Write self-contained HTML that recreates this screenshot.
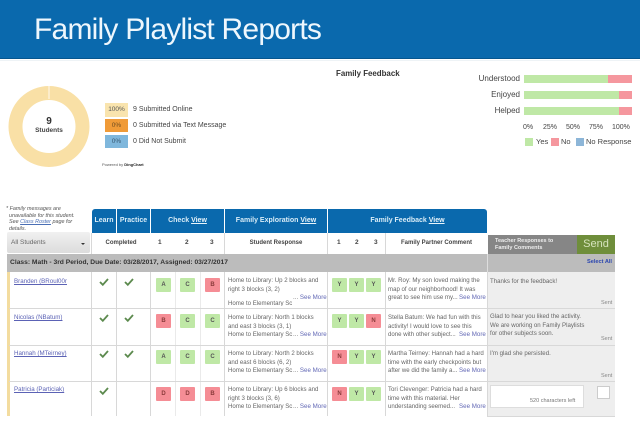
<!DOCTYPE html>
<html><head><meta charset="utf-8">
<style>
html,body{margin:0;padding:0;background:#fff}
#p{position:relative;width:640px;height:430px;overflow:hidden;background:#fff;font-family:"Liberation Sans",sans-serif;color:#444;filter:blur(.3px)}
#p div,#p svg{position:absolute}
.t{white-space:nowrap;line-height:1}
.b{font-weight:bold}
.hd{background:#0a69ad;color:#d8ecf7;top:209px;height:24px;line-height:24px;text-align:center;font-size:7px;font-weight:bold;white-space:nowrap}
.hd u{color:#e8f4fb}
.bad{width:15px;height:14px;line-height:14px;text-align:center;font-size:6px;font-weight:bold;color:#555;border-radius:1px}
.g{background:#bfe8a6}
.r{background:#f58d95;color:#8a3a3a}
.vl{width:1px;background:#d8d8d8;top:254px;height:163px}
.hl{height:1px;background:#d8d8d8;left:9px;width:606px}
.tx{font-size:6.1px;line-height:8.5px;color:#666;white-space:nowrap}
.lnk{font-size:6.2px;color:#5b62b5;text-decoration:underline;white-space:nowrap;line-height:1}
.more{font-size:6.2px;color:#6268b5;white-space:nowrap;line-height:1}
</style></head><body>
<div id="p">
<div style="left:0;top:0;width:640px;height:58px;background:#0a69ad;border-bottom:1px solid #06568f"></div>
<div class="t" style="left:34px;top:15px;font-size:30px;color:#eef7fd;letter-spacing:-.78px">Family Playlist Reports</div>
<div style="left:0;top:60px;width:640px;height:1px;background:#eef3f6"></div>

<svg style="left:0;top:80px" width="100" height="95"><circle cx="49" cy="46.5" r="33.5" fill="none" stroke="#f9e0a6" stroke-width="14"/><rect x="48.6" y="6" width=".8" height="13" fill="#fff"/></svg>
<div class="t b" style="left:39px;top:117px;width:20px;text-align:center;font-size:10px;color:#333">9</div>
<div class="t b" style="left:29px;top:128px;width:40px;text-align:center;font-size:6.5px;color:#444">Students</div>

<div style="left:105px;top:103px;width:23px;height:14px;line-height:14px;background:#f9e4ae;text-align:center;font-size:6.5px;color:#555">100%</div>
<div style="left:105px;top:119px;width:23px;height:13px;line-height:13px;background:#f09b38;text-align:center;font-size:6.5px;color:#6b4a20">0%</div>
<div style="left:105px;top:135px;width:23px;height:13px;line-height:13px;background:#7fb7dc;text-align:center;font-size:6.5px;color:#35566e">0%</div>
<div class="t" style="left:133px;top:106px;font-size:7px">9 Submitted Online</div>
<div class="t" style="left:133px;top:122px;font-size:7px">0 Submitted via Text Message</div>
<div class="t" style="left:133px;top:138px;font-size:7px">0 Did Not Submit</div>
<div class="t" style="left:102px;top:163px;font-size:4px;color:#555">Powered by <b style="color:#222">DingChart</b></div>

<div class="t b" style="left:336px;top:70px;font-size:7.9px;color:#333">Family Feedback</div>
<div class="t" style="right:120px;top:75px;font-size:8px">Understood</div>
<div class="t" style="right:120px;top:91px;font-size:8px">Enjoyed</div>
<div class="t" style="right:120px;top:107px;font-size:8px">Helped</div>
<div style="left:524px;top:75px;width:84px;height:8px;background:#bfe8a6"></div><div style="left:608px;top:75px;width:24px;height:8px;background:#f5979e"></div>
<div style="left:524px;top:91px;width:95px;height:8px;background:#bfe8a6"></div><div style="left:619px;top:91px;width:13px;height:8px;background:#f5979e"></div>
<div style="left:524px;top:107px;width:95px;height:8px;background:#bfe8a6"></div><div style="left:619px;top:107px;width:13px;height:8px;background:#f5979e"></div>
<div class="t" style="left:523px;top:124px;font-size:7px">0%</div>
<div class="t" style="left:543px;top:124px;font-size:7px">25%</div>
<div class="t" style="left:566px;top:124px;font-size:7px">50%</div>
<div class="t" style="left:589px;top:124px;font-size:7px">75%</div>
<div class="t" style="left:612px;top:124px;font-size:7px">100%</div>
<div style="left:525px;top:138px;width:8px;height:8px;background:#bfe8a6"></div>
<div class="t" style="left:536px;top:138px;font-size:7.5px">Yes</div>
<div style="left:551px;top:138px;width:8px;height:8px;background:#f5979e"></div>
<div class="t" style="left:561px;top:138px;font-size:7.5px">No</div>
<div style="left:576px;top:138px;width:8px;height:8px;background:#8db6d8"></div>
<div class="t" style="left:586px;top:138px;font-size:7.5px">No Response</div>

<div class="tx" style="left:6px;top:206px;font-size:5.4px;line-height:6.5px;font-style:italic;color:#555">* Family messages are<br>&nbsp;&nbsp;unavailable for this student.<br>&nbsp;&nbsp;See <span style="color:#4a6fb5;text-decoration:underline">Class Roster</span> page for<br>&nbsp;&nbsp;details.</div>

<div class="hd" style="left:92px;width:24px;border-radius:3px 0 0 0">Learn</div>
<div class="hd" style="left:117px;width:33px">Practice</div>
<div class="hd" style="left:151px;width:73px">Check <u>View</u></div>
<div class="hd" style="left:225px;width:102px">Family Exploration <u>View</u></div>
<div class="hd" style="left:328px;width:159px;border-radius:0 3px 0 0">Family Feedback <u>View</u></div>

<div style="left:7px;top:232px;width:83px;height:21px;background:linear-gradient(#f0f0f0,#dcdcdc);border-radius:2px"></div>
<div class="t" style="left:11px;top:240px;font-size:6.5px;color:#666">All Students</div>
<div style="left:81px;top:243px;width:0;height:0;border-left:2.5px solid transparent;border-right:2.5px solid transparent;border-top:2.5px solid #333"></div>

<div class="t b" style="left:92px;top:240px;width:58px;text-align:center;font-size:6px">Completed</div>
<div class="t b" style="left:158px;top:240px;font-size:6.5px">1</div>
<div class="t b" style="left:185px;top:240px;font-size:6.5px">2</div>
<div class="t b" style="left:210px;top:240px;font-size:6.5px">3</div>
<div class="t b" style="left:225px;top:240px;width:102px;text-align:center;font-size:6px">Student Response</div>
<div class="t b" style="left:337px;top:240px;font-size:6.5px">1</div>
<div class="t b" style="left:355px;top:240px;font-size:6.5px">2</div>
<div class="t b" style="left:374px;top:240px;font-size:6.5px">3</div>
<div class="t b" style="left:386px;top:240px;width:101px;text-align:center;font-size:6px">Family Partner Comment</div>

<div style="left:488px;top:235px;width:89px;height:19px;background:#868686"></div>
<div class="tx" style="left:495px;top:237.5px;font-size:5.5px;line-height:7px;color:#eee;font-weight:bold">Teacher Responses to<br>Family Comments</div>
<div style="left:577px;top:235px;width:38px;height:19px;line-height:19px;background:#6f8e3b;color:#d6e3bd;text-align:center;font-size:11px">Send</div>

<div style="left:488px;top:272px;width:127px;height:145px;background:#eeeeee"></div>
<div style="left:7px;top:272px;width:3px;height:144px;background:#f3dc9f"></div>
<div class="vl" style="left:91px;top:233px;height:183px"></div>
<div class="vl" style="left:116px;top:272px;height:144px"></div>
<div class="vl" style="left:150px;top:272px;height:144px"></div>
<div class="vl" style="left:175px;top:272px;height:144px;background:#eaeaea"></div>
<div class="vl" style="left:200px;top:272px;height:144px;background:#eaeaea"></div>
<div class="vl" style="left:224px;top:233px;height:183px"></div>
<div class="vl" style="left:327px;top:233px;height:183px"></div>
<div class="vl" style="left:385px;top:233px;height:183px"></div>
<div class="vl" style="left:487px;top:272px;height:145px"></div>

<div style="left:7px;top:254px;width:608px;height:18px;background:#bcbcbc"></div>
<div class="t b" style="left:10px;top:260px;font-size:6.7px;color:#333">Class: Math - 3rd Period, Due Date: 03/28/2017, Assigned: 03/27/2017</div>
<div class="t b" style="left:587px;top:260px;font-size:5.6px;color:#2b46b0">Select All</div>
<div style="left:487px;top:254px;width:1px;height:18px;background:#ddd"></div>

<div class="hl" style="top:308px"></div>
<div class="hl" style="top:345px"></div>
<div class="hl" style="top:381px"></div>
<div class="hl" style="top:416px;left:488px;width:127px"></div>

<div class="lnk" style="left:14px;top:279px">Branden (BRoul00r</div>
<div class="lnk" style="left:14px;top:315px">Nicolas (NBatum)</div>
<div class="lnk" style="left:14px;top:351px">Hannah (MTeirney)</div>
<div class="lnk" style="left:14px;top:387px">Patricia (Particiak)</div>

<svg style="left:98px;top:277px" width="12" height="10" viewBox="0 0 12 10"><path d="M2 5l2.8 2.8L10 2" fill="none" stroke="#5c8a4e" stroke-width="1.8"/></svg>
<svg style="left:123px;top:277px" width="12" height="10" viewBox="0 0 12 10"><path d="M2 5l2.8 2.8L10 2" fill="none" stroke="#5c8a4e" stroke-width="1.8"/></svg>
<svg style="left:98px;top:313px" width="12" height="10" viewBox="0 0 12 10"><path d="M2 5l2.8 2.8L10 2" fill="none" stroke="#5c8a4e" stroke-width="1.8"/></svg>
<svg style="left:123px;top:313px" width="12" height="10" viewBox="0 0 12 10"><path d="M2 5l2.8 2.8L10 2" fill="none" stroke="#5c8a4e" stroke-width="1.8"/></svg>
<svg style="left:98px;top:349px" width="12" height="10" viewBox="0 0 12 10"><path d="M2 5l2.8 2.8L10 2" fill="none" stroke="#5c8a4e" stroke-width="1.8"/></svg>
<svg style="left:123px;top:349px" width="12" height="10" viewBox="0 0 12 10"><path d="M2 5l2.8 2.8L10 2" fill="none" stroke="#5c8a4e" stroke-width="1.8"/></svg>
<svg style="left:98px;top:386px" width="12" height="10" viewBox="0 0 12 10"><path d="M2 5l2.8 2.8L10 2" fill="none" stroke="#5c8a4e" stroke-width="1.8"/></svg>

<div class="bad g" style="left:156px;top:278px">A</div><div class="bad g" style="left:180px;top:278px">C</div><div class="bad r" style="left:205px;top:278px">B</div>
<div class="bad r" style="left:156px;top:314px">B</div><div class="bad g" style="left:180px;top:314px">C</div><div class="bad g" style="left:205px;top:314px">C</div>
<div class="bad g" style="left:156px;top:350px">A</div><div class="bad g" style="left:180px;top:350px">C</div><div class="bad g" style="left:205px;top:350px">C</div>
<div class="bad r" style="left:156px;top:387px">D</div><div class="bad r" style="left:180px;top:387px">D</div><div class="bad r" style="left:205px;top:387px">B</div>

<div class="bad g" style="left:332px;top:278px">Y</div><div class="bad g" style="left:349px;top:278px">Y</div><div class="bad g" style="left:366px;top:278px">Y</div>
<div class="bad g" style="left:332px;top:314px">Y</div><div class="bad g" style="left:349px;top:314px">Y</div><div class="bad r" style="left:366px;top:314px">N</div>
<div class="bad r" style="left:332px;top:350px">N</div><div class="bad g" style="left:349px;top:350px">Y</div><div class="bad g" style="left:366px;top:350px">Y</div>
<div class="bad r" style="left:332px;top:387px">N</div><div class="bad g" style="left:349px;top:387px">Y</div><div class="bad g" style="left:366px;top:387px">Y</div>

<div class="tx" style="left:228px;top:277px;line-height:8.5px">Home to Library: Up 2 blocks and<br>right 3 blocks (3, 2)</div>
<div class="tx" style="left:228px;top:300px;height:6px;overflow:hidden;line-height:8.5px">Home to Elementary Sc</div>
<div class="more" style="left:293px;top:295px"><span style="color:#777">...</span> See More</div>

<div class="tx" style="left:228px;top:314px">Home to Library: North 1 blocks<br>and east 3 blocks (3, 1)<br>Home to Elementary Sc</div>
<div class="more" style="left:293px;top:332px"><span style="color:#777">...</span> See More</div>
<div class="tx" style="left:228px;top:350px">Home to Library: North 2 blocks<br>and east 6 blocks (6, 2)<br>Home to Elementary Sc</div>
<div class="more" style="left:293px;top:368px"><span style="color:#777">...</span> See More</div>
<div class="tx" style="left:228px;top:386px">Home to Library: Up 6 blocks and<br>right 3 blocks (3, 6)<br>Home to Elementary Sc</div>
<div class="more" style="left:293px;top:404px"><span style="color:#777">...</span> See More</div>

<div class="tx" style="left:388px;top:277px">Mr. Roy: My son loved making the<br>map of our neighborhood! It was<br>great to see him use my...</div>
<div class="more" style="left:459px;top:295px">See More</div>
<div class="tx" style="left:388px;top:314px">Stella Batum: We had fun with this<br>activity! I would love to see this<br>done with other subject...</div>
<div class="more" style="left:459px;top:332px">See More</div>
<div class="tx" style="left:388px;top:350px">Martha Teirney: Hannah had a hard<br>time with the early checkpoints but<br>after we did the family a...</div>
<div class="more" style="left:459px;top:368px">See More</div>
<div class="tx" style="left:388px;top:386px">Tori Clevenger: Patricia had a hard<br>time with this material. Her<br>understanding seemed...</div>
<div class="more" style="left:459px;top:404px">See More</div>

<div class="tx" style="left:490px;top:278px">Thanks for the feedback!</div>
<div class="t" style="left:601px;top:301px;font-size:5.5px;color:#888">Sent</div>
<div class="tx" style="left:490px;top:313px">Glad to hear you liked the activity.<br>We are working on Family Playlists<br>for other subjects soon.</div>
<div class="t" style="left:601px;top:337px;font-size:5.5px;color:#888">Sent</div>
<div class="tx" style="left:490px;top:350px">I'm glad she persisted.</div>
<div class="t" style="left:601px;top:374px;font-size:5.5px;color:#888">Sent</div>
<div style="left:490px;top:385px;width:92px;height:21px;background:#fff;border:1px solid #ddd"></div>
<div class="t" style="left:530px;top:399px;font-size:5.5px;color:#777">520 characters left</div>
<div style="left:597px;top:386px;width:11px;height:11px;background:#fff;border:1px solid #ccc"></div>
</div>
</body></html>
